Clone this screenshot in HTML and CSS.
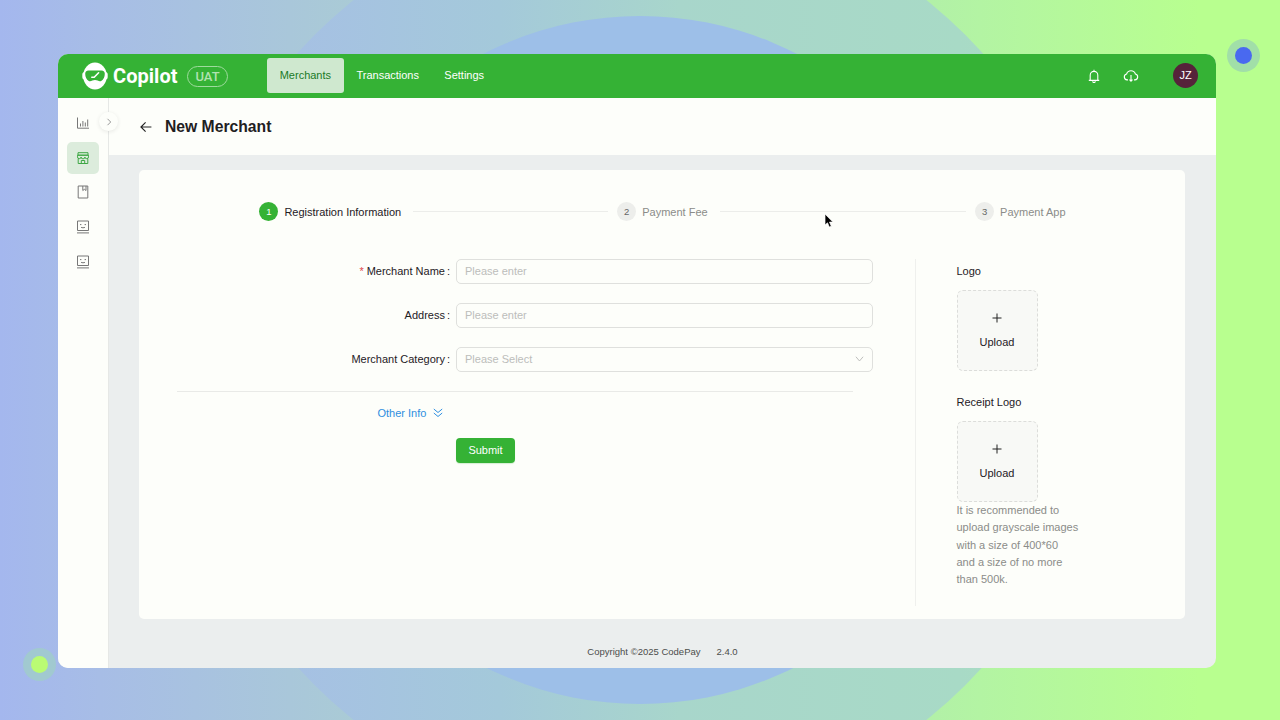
FILE: index.html
```
<!DOCTYPE html>
<html lang="en">
<head>
  <meta charset="UTF-8">
  <meta name="viewport" content="width=device-width, initial-scale=1.0">
  <title>New Merchant - Copilot</title>
  <link rel="stylesheet" href="styles.css">
</head>
<body>

<div class="stage">
  <div class="circle circle-outer"></div>
  <div class="circle circle-inner"></div>
  <div class="dot dot-blue"></div>
  <div class="dot dot-lime"></div>

  <div class="window">
    <header class="topbar">
      <a class="brand" href="#">
        <svg class="brand-logo" viewBox="0 0 26 28">
          <ellipse cx="13" cy="14" rx="11.800" ry="13.500" fill="#fff"/>
          <rect x="0.300" y="10" width="25.400" height="7.500" rx="2.500" fill="#fff"/>
          <path d="M6.500 8.500h13c2.200 0 3.300 1.300 3.300 3.300 0 3.200-1.200 6-3.600 7.100-2.200.9-3.600-.9-6.200-.9s-4 1.800-6.200.9C4.400 17.800 3.200 15 3.200 11.800c0-2 1.100-3.300 3.300-3.300z" fill="#35b235"/>
          <path d="M9.800 15.300h2.400l4.400-4.500" stroke="#fff" stroke-width="1.600" stroke-linecap="round" stroke-linejoin="round"/>
        </svg>
        <span class="brand-name">Copilot</span>
        <span class="brand-tag">UAT</span>
      </a>
      <nav class="menu">
        <a class="menu-item active" href="#">Merchants</a>
        <a class="menu-item" href="#">Transactions</a>
        <a class="menu-item" href="#">Settings</a>
      </nav>
      <div class="tools">
        <svg class="tool-icon" viewBox="0 0 14 14">
          <path d="M1.800 11.400h10.400M3.200 11.400V6.200a3.800 3.800 0 0 1 7.600 0v5.200M7 2.300V.8M5.700 12.300a1.300 1.300 0 0 0 2.600 0"/>
        </svg>
        <svg class="tool-icon tool-cloud" viewBox="0 0 16 14">
          <path d="M5 10.900H4A3 3 0 0 1 3.600 5a4.600 4.600 0 0 1 8.800 0 3 3 0 0 1-.4 5.900h-1M8 6v6M6.500 10.600L8 12.200l1.500-1.600"/>
        </svg>
        <span class="avatar">JZ</span>
      </div>
    </header>

    <div class="main">
      <aside class="sidebar">
        <a class="side-item" href="#">
          <svg viewBox="0 0 14 14"><path d="M1.500 1.500v10.700h11.500M4.500 10.500V7.500M6.900 10.500V5M9.300 10.500V6.500M11.700 10.500V3.500"/></svg>
        </a>
        <a class="side-item active" href="#">
          <svg viewBox="0 0 14 14"><path d="M2 1.700h10v2.500H2zM1.500 4.200h11v1.600a1.800 1.800 0 0 1-3.600.2 1.900 1.900 0 0 1-3.800 0 1.800 1.800 0 0 1-3.600-.2zM2.200 7.600v4.900h9.600V7.600M5.300 12.300V9.500h3.400v2.800"/></svg>
        </a>
        <a class="side-item" href="#">
          <svg viewBox="0 0 14 14"><path d="M2.200 1h9.600v12H2.200zM6.800 1v4.500L8.400 4.300 10 5.500V1"/></svg>
        </a>
        <a class="side-item" href="#">
          <svg viewBox="0 0 14 14"><path d="M1.500 1h11v9.500h-11zM1 12.900h12M4 4.600h1.400M8.600 4.600H10M5 7.300c1.100.6 2.900.6 4 0"/></svg>
        </a>
        <a class="side-item" href="#">
          <svg viewBox="0 0 14 14"><path d="M1.500 1h11v9.500h-11zM1 12.900h12M4 4.600h1.400M8.600 4.600H10M5 7.300c1.100.6 2.900.6 4 0"/></svg>
        </a>
        <span class="collapse">
          <svg viewBox="0 0 8 8"><path d="M2.500.8L5.700 4 2.500 7.200"/></svg>
        </span>
      </aside>

      <div class="content">
        <div class="page-head">
          <svg class="back" viewBox="0 0 12 12"><path d="M11.400 6H1M5.600 1.300L.9 6l4.700 4.700"/></svg>
          <h1>New Merchant</h1>
        </div>

        <div class="card">
          <div class="steps">
            <div class="step active"><span class="step-num">1</span>Registration Information</div>
            <div class="step"><span class="step-num">2</span>Payment Fee</div>
            <div class="step"><span class="step-num">3</span>Payment App</div>
          </div>

          <div class="card-body">
            <form class="form">
              <div class="row">
                <label for="name"><span class="required">*</span>Merchant Name<span class="colon">:</span></label>
                <input id="name" type="text" placeholder="Please enter">
              </div>
              <div class="row">
                <label for="address">Address<span class="colon">:</span></label>
                <input id="address" type="text" placeholder="Please enter">
              </div>
              <div class="row">
                <label>Merchant Category<span class="colon">:</span></label>
                <div class="select">
                  <span>Please Select</span>
                  <svg viewBox="0 0 10 8"><path d="M1 1.500l4 4.700 4-4.700"/></svg>
                </div>
              </div>
              <div class="line"></div>
              <a class="other" href="#">Other Info
                <svg viewBox="0 0 10 10"><path d="M.8 1L5 4.500 9.200 1M.8 5L5 8.500 9.200 5"/></svg>
              </a>
              <button class="submit" type="button">Submit</button>
            </form>

            <div class="uploads">
              <p class="upload-title">Logo</p>
              <div class="upload">
                <svg viewBox="0 0 10 10"><path d="M5 .5v9M.5 5h9"/></svg>
                <span>Upload</span>
              </div>
              <p class="upload-title second">Receipt Logo</p>
              <div class="upload">
                <svg viewBox="0 0 10 10"><path d="M5 .5v9M.5 5h9"/></svg>
                <span>Upload</span>
              </div>
              <p class="hint">It is recommended to upload grayscale images with a size of 400*60<br>and a size of no more than 500k.</p>
            </div>
          </div>
        </div>

        <footer class="footer">
          <span>Copyright ©2025 CodePay</span>
          <span>2.4.0</span>
        </footer>
      </div>
    </div>
  </div>

  <svg class="cursor" viewBox="0 0 10 16">
    <path d="M1 1v11l2.500-2.200 1.800 4.300 2-.9-1.800-4.100h3.400z" fill="#000" stroke="#fff" stroke-width="0.700"/>
  </svg>
</div>

</body>
</html>
```
FILE: styles.css
```
* {
  box-sizing: border-box;
}

body {
  margin: 0;
  font-family: "Liberation Sans", Arial, sans-serif;
  font-size: 11px;
  color: #1f201f;
}

a {
  color: inherit;
  text-decoration: none;
}

p, h1 {
  margin: 0;
}

svg {
  display: block;
  fill: none;
}

.stage {
  position: relative;
  width: 1280px;
  height: 720px;
  padding: 54px 64px 52px 58px;
  overflow: hidden;
  background: linear-gradient(90deg, #a4b7ee 0, #a7bde6 100px, #a9c7da 290px, #acdcc0 640px, #b3f4a3 980px, #b8ff8f 1200px);
}

/* background shapes */
.circle {
  position: absolute;
  border-radius: 50%;
}

.circle-outer {
  left: 180px;
  top: -100px;
  width: 920px;
  height: 920px;
  background: linear-gradient(90deg, #a6c0e4 100px, #a4c9da 320px, #a8d6cb 500px, #a8dac6 780px, #aae0bc 920px);
}

.circle-inner {
  left: 296px;
  top: 16px;
  width: 688px;
  height: 688px;
  background: #9dbfe8;
}

.dot {
  position: absolute;
  width: 17px;
  height: 17px;
  border-radius: 50%;
}

.dot-blue {
  left: 1235px;
  top: 47px;
  background: #4969f0;
  box-shadow: 0 0 0 8px #a1dfa8;
}

.dot-lime {
  left: 31px;
  top: 656px;
  background: #bafb73;
  box-shadow: 0 0 0 8px rgba(158, 211, 190, 0.6);
}

/* app window */
.window {
  position: relative;
  display: flex;
  flex-direction: column;
  width: 1158px;
  height: 614px;
  border-radius: 10px;
  overflow: hidden;
  background: #ebeeee;
}

.topbar {
  display: flex;
  flex: none;
  align-items: center;
  height: 44px;
  padding: 0 18px 1px 24px;
  background: #35b235;
  color: #fff;
}

.brand {
  display: flex;
  align-items: center;
  width: 185px;
}

.brand-logo {
  width: 26px;
  height: 28px;
}

.brand-name {
  width: 65px;
  margin-left: 5px;
  font: bold 20px Roboto, sans-serif;
  letter-spacing: 0.050px;
}

.brand-tag {
  width: 41px;
  height: 21px;
  margin: 2px 0 0 9px;
  border: 1px solid #9edb9d;
  border-radius: 11px;
  color: #b1e2b0;
  font: 500 13px/19px Roboto, sans-serif;
  text-align: center;
}

.menu {
  display: flex;
}

.menu-item {
  height: 35px;
  padding: 0 12.700px;
  border-radius: 3px;
  line-height: 35px;
}

.menu-item.active {
  background: #cfe8cf;
  color: #207a27;
}

.tools {
  display: flex;
  align-items: center;
  margin-left: auto;
}

.tool-icon {
  width: 14px;
  height: 14px;
  stroke: #fff;
  stroke-width: 1.100;
}

.tool-cloud {
  width: 16px;
  margin: 0 34px 0 22px;
}

.avatar {
  width: 25px;
  height: 25px;
  border-radius: 50%;
  background: #56233a;
  line-height: 25px;
  text-align: center;
}

.main {
  display: flex;
  flex: 1;
}

.sidebar {
  position: relative;
  display: flex;
  flex-direction: column;
  align-items: center;
  gap: 2.700px;
  width: 51px;
  padding: 9px 1px 0 0;
  border-right: 1px solid #e6e8e6;
  background: #fdfefa;
}

.side-item {
  display: flex;
  align-items: center;
  justify-content: center;
  width: 32px;
  height: 32px;
  border-radius: 5px;
}

.side-item.active {
  background: #dcecdc;
}

.side-item svg {
  width: 14px;
  height: 14px;
  stroke: #777;
}

.side-item.active svg {
  stroke: #3ea744;
}

.collapse {
  position: absolute;
  top: 14px;
  right: -10px;
  display: flex;
  align-items: center;
  justify-content: center;
  width: 19px;
  height: 19px;
  border-radius: 50%;
  background: #fdfefa;
  box-shadow: 0 1px 4px rgba(0, 0, 0, 0.09);
}

.collapse svg {
  width: 8px;
  height: 8px;
  stroke: #999;
}

.content {
  display: flex;
  flex: 1;
  flex-direction: column;
}

.page-head {
  display: flex;
  align-items: center;
  gap: 13px;
  height: 57px;
  padding-left: 31px;
  background: #fdfefa;
}

.back {
  width: 12px;
  height: 12px;
  stroke: #222;
  stroke-width: 1.100;
}

h1 {
  font-size: 15.700px;
  line-height: 20px;
}

.card {
  height: 449px;
  margin: 15px 31px 0 30px;
  padding: 32px 38px 0;
  border-radius: 5px;
  background: #fdfefa;
}

/* steps */
.steps {
  display: flex;
  gap: 9px;
  padding: 0 81.500px 0 82.400px;
}

.step {
  display: flex;
  flex: 1;
  align-items: center;
  height: 19px;
  color: #8b8c89;
  line-height: 18px;
  white-space: nowrap;
}

.step:last-child {
  flex: none;
}

.step.active {
  color: #1f201f;
}

.step:not(:last-child)::after {
  content: "";
  flex: 1;
  height: 1px;
  margin-left: 12px;
  background: #ecedea;
}

.step-num {
  width: 19px;
  height: 19px;
  margin-right: 6px;
  border-radius: 50%;
  background: #edeeeb;
  color: #656664;
  font-size: 9.500px;
  line-height: 19px;
  text-align: center;
}

.step.active .step-num {
  background: #35b235;
  color: #fff;
}

/* form */
.card-body {
  display: flex;
  margin-top: 38px;
}

.form {
  width: 739px;
  height: 347px;
  border-right: 1px solid #eff0ed;
}

.row {
  display: flex;
  align-items: center;
  height: 25px;
  margin-bottom: 19px;
}

label {
  width: 273px;
  margin-right: 6px;
  padding-bottom: 1px;
  text-align: right;
}

.required {
  margin-right: 3px;
  color: #e0484d;
}

.colon {
  margin-left: 2px;
}

input,
.select {
  width: 416.500px;
  height: 25px;
  padding: 0 8px 1px;
  border: 1px solid #dfe0dd;
  border-radius: 5px;
  background: transparent;
  font: inherit;
  color: #bcbdba;
}

input::placeholder {
  color: #bcbdba;
}

.select {
  display: flex;
  align-items: center;
  justify-content: space-between;
}

.select svg {
  width: 9px;
  height: 8px;
  stroke: #b7b8b5;
}

.line {
  width: 676px;
  height: 1px;
  background: #e9eae7;
}

.other {
  display: flex;
  align-items: center;
  gap: 7px;
  margin: 12px 0 0 200.500px;
  line-height: 18px;
  color: #2f8fe0;
}

.other svg {
  width: 10px;
  height: 10px;
  stroke: currentColor;
}

.submit {
  display: block;
  width: 59px;
  height: 25px;
  margin: 16px 0 0 279px;
  padding: 0 0 1px;
  border: none;
  border-radius: 4px;
  background: #35b235;
  box-shadow: 0 1px 1px rgba(53, 178, 53, 0.2);
  color: #fff;
  font: inherit;
}

/* uploads */
.uploads {
  width: 166px;
  padding-left: 40.500px;
}

.upload-title {
  height: 31px;
  line-height: 25px;
}

.upload-title.second {
  margin-top: 19px;
}

.upload {
  display: flex;
  flex-direction: column;
  align-items: center;
  width: 81px;
  height: 81px;
  padding-top: 22px;
  border: 1px dashed #dcddda;
  border-radius: 6px;
  background: #f8f9f6;
}

.upload svg {
  width: 10px;
  height: 10px;
  margin-bottom: 13px;
  stroke: #222;
}

.hint {
  line-height: 17.300px;
  color: #8b8c89;
}

.footer {
  display: flex;
  justify-content: center;
  gap: 16px;
  margin-top: 27px;
  color: #4b4d4c;
  font-size: 9.500px;
  line-height: 12px;
}

.cursor {
  position: absolute;
  left: 824px;
  top: 213px;
  width: 10px;
  height: 16px;
}
```
